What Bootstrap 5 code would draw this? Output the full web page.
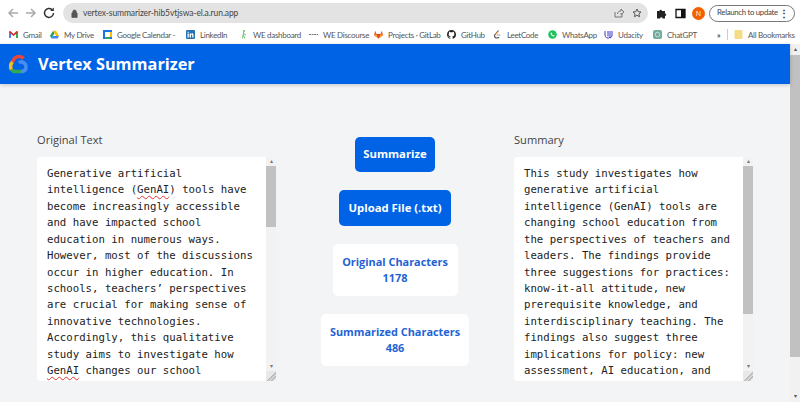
<!DOCTYPE html>
<html lang="en">
<head>
<meta charset="utf-8">
<title>Vertex Summarizer</title>
<link href="https://cdn.jsdelivr.net/npm/bootstrap@5.3.0/dist/css/bootstrap.min.css" rel="stylesheet">
<style>
html,body{height:402px;overflow:hidden;margin:0}
body{font-family:"Open Sans","Noto Sans",sans-serif;background:#f3f4f6;color:#333}
.shell{height:402px}
.toolbar{height:25px;background:#fff;padding:3px 5px 2px 6px}
.nav-ic{width:14px;height:14px;color:#aaa;flex:none;margin-right:4px}
.nav-ic.on{color:#333}
.omnibox{width:585px;height:20px;flex:none;margin-left:3px;border-radius:10px;background:#e3e3e3;font-family:Lato,sans-serif;font-size:8.5px;letter-spacing:-.1px;color:#444;padding:0 6px 0 8px;gap:5px}
.url{flex:1;white-space:nowrap}
.tool-ic{flex:none}
.star-ic{margin-left:3px}
.tb-right{margin-left:8px;gap:8px}
.avatar{width:13px;height:13px;border-radius:50%;background:#f26100;color:#fff;font-size:7px;line-height:13px;text-align:center;margin-left:-2px}
.relaunch{width:86px;height:17px;flex:none;border:1px solid #777;border-radius:9px;font-family:Lato,sans-serif;font-size:7.8px;letter-spacing:-.3px;color:#444;padding:0 5px 0 7px;white-space:nowrap;margin-left:-4px}
.dots{font-weight:700;font-size:10px;line-height:1;color:#333}
.bookmarks{height:19px;background:#fff;font-family:Lato,sans-serif;font-size:8px;letter-spacing:-.3px;color:#555;padding-left:9px;white-space:nowrap}
.bm{height:100%;gap:5px;flex:none}
.bm svg{flex:none;width:9px;height:9px}
.w1{width:41px}.w2{width:53px}.w3{width:83px}.w4{width:53px}.w5{width:70px}.w6{width:65px}.w7{width:73px}.w8{width:46px}.w9{width:55px}.w10{width:56px}.w11{width:49px}.w12{width:64px}
.chev{width:10px;flex:none;font-weight:700;color:#444}
.sep{width:1px;height:11px;background:#ccc;margin-right:6px;flex:none}
.belowbars{height:358px}
.appcol{width:790px;flex:none}
.appbar{height:40px;background:#0063e5;color:#fff;padding-left:9px;gap:10px;box-shadow:0 1px 4px rgba(0,0,0,.2);position:relative}
.apptitle{font-family:"Open Sans",sans-serif;font-size:16.3px;font-weight:700;margin:0;line-height:1}
.main-area{padding:48px 37px 0}
.pane{width:239px}
.pane-label{font-size:11.1px;line-height:16px;margin-bottom:9px;color:#444}
.textbox{width:239px;height:224px;background:#fff;border-radius:4px;overflow:hidden}
.textbody{flex:1;padding:9px 0 0 10px;font-family:"DejaVu Sans Mono","Liberation Mono",monospace;font-size:10.7px;line-height:16.42px;color:#222;white-space:nowrap;overflow:hidden}
.sq{text-decoration:underline wavy #d33 1px;text-underline-offset:2px}
.sbar{width:10px;background:#f2f2f2;flex:none}
.arrow{height:9px;color:#777;font-size:6px;line-height:9px;text-align:center}
.thumb{background:#c1c1c1;margin-bottom:auto}
.thumb-a{height:61px}.thumb-b{height:148px}
.grip{height:10px;background:linear-gradient(135deg,#e8e8e8 50%,#aaa 50%,#ddd 70%,#999 70%,#e0e0e0 85%)}
.midcol{padding-top:5px;gap:18px}
.action{background:#0063e5;color:#fff;border:0;border-radius:5px;font-size:11.3px;font-weight:700;height:35px;padding:0;font-family:inherit}
.act-a{width:80px}.act-b{width:112px;height:36px}
.stat{background:#fff;border-radius:5px;height:52px;color:#1f63d6;font-size:10.9px;font-weight:700;line-height:16.4px;text-align:center}
.st-a{width:125px}.st-b{width:148px}
.pagebar{width:10px;background:#f1f1f1;flex:none}
.pb-thumb{height:302px;background:#c1c1c1;margin-bottom:auto}
.pb-arrow{height:11px;font-size:6px;line-height:11px;text-align:center;color:#555}
</style>
</head>
<body>
<div class="shell d-flex flex-column">
  <div class="toolbar d-flex align-items-center">
    <svg class="nav-ic" viewBox="0 0 14 14" fill="none" stroke="currentColor" stroke-width="1.5"><path d="M12 7H3M7 3 3 7l4 4"/></svg>
    <svg class="nav-ic" viewBox="0 0 14 14" fill="none" stroke="currentColor" stroke-width="1.5"><path d="M2 7h9M7 3l4 4-4 4"/></svg>
    <svg class="nav-ic on" viewBox="0 0 14 14" fill="none" stroke="currentColor" stroke-width="1.5"><path d="M11.5 7A4.5 4.5 0 1 1 10 3.600"/><path d="M11.800 1.500v3.600H8.200" fill="currentColor" stroke="none"/></svg>
    <div class="omnibox d-flex align-items-center">
      <svg class="tool-ic" width="7" height="9" viewBox="0 0 8 9"><path d="M1 4h6v5H1zM2 4V2.500a2 2 0 0 1 4 0V4" fill="#555" stroke="#555" stroke-width=".8"/></svg>
      <span class="url">vertex-summarizer-hib5vtjswa-el.a.run.app</span>
      <svg class="tool-ic" width="10" height="10" viewBox="0 0 10 10" fill="none" stroke="#777"><path d="M1 4v5h7V6M3.500 6c0-2 1.500-3 3.500-3V1l3 3-3 2.500V5"/></svg>
      <svg class="tool-ic star-ic" width="10" height="10" viewBox="0 0 10 10" fill="none" stroke="#555"><path d="m5 1 1.200 2.700 2.800.3-2.100 1.900.6 2.800L5 7.300 2.500 8.700l.6-2.800L1 4l2.800-.3z"/></svg>
    </div>
    <div class="tb-right d-flex align-items-center">
      <svg width="11" height="11" viewBox="0 0 11 11"><path d="M1 3h2.500a1.200 1.200 0 0 1 2.400 0H9v2.500a1.200 1.200 0 0 1 0 2.400V10.500H6.500a1.200 1.200 0 0 0-2.400 0H1z" fill="#222"/></svg>
      <svg width="11" height="11" viewBox="0 0 11 11"><path d="M1 1.500h9v8H1z" fill="none" stroke="#111" stroke-width="1.300"/><path d="M6 1.500h4v8H6z" fill="#111"/></svg>
      <div class="avatar">N</div>
      <div class="relaunch d-flex align-items-center justify-content-between"><span>Relaunch to update</span><span class="dots">⋮</span></div>
    </div>
  </div>
  <div class="bookmarks d-flex align-items-center">
    <div class="bm w1 d-flex align-items-center"><svg viewBox="0 0 9 9"><path d="M0 1.500 1.500 1 4.500 4l3-3L9 1.500V8H7V4L4.500 6 2 4v4H0z" fill="#d93025"/><path d="M0 2v6h2V4z" fill="#4285f4"/><path d="M7 4v4h2V2z" fill="#34a853"/></svg><span>Gmail</span></div>
    <div class="bm w2 d-flex align-items-center"><svg viewBox="0 0 9 9"><path d="M3 .8 0 6l1.500 2.500L4.500 3.300z" fill="#1ea362"/><path d="M6 .8H3L6 6h3z" fill="#fbbc04"/><path d="M1.500 8.500 3 6h6L7.500 8.500z" fill="#4285f4"/></svg><span>My Drive</span></div>
    <div class="bm w3 d-flex align-items-center"><svg viewBox="0 0 9 9"><rect width="9" height="9" fill="#1a73e8"/><rect x="2" y="2" width="5" height="5" fill="#fff"/><path d="M7 2h2v5H7z" fill="#fbbc04"/><path d="M2 7h5v2H2z" fill="#34a853"/></svg><span>Google Calendar -</span></div>
    <div class="bm w4 d-flex align-items-center"><svg viewBox="0 0 9 9"><rect width="9" height="9" rx="1" fill="#2573b5"/><path d="M1.500 3.500h1.300V7.500H1.500zM1.500 1.700h1.300V2.800H1.500zM3.700 3.500H5V4c.8-1 2.500-.9 2.500 1v2.500H6.200V5.300c0-1-1.200-1-1.200 0v2.200H3.700z" fill="#fff"/></svg><span>LinkedIn</span></div>
    <div class="bm w5 d-flex align-items-center"><svg viewBox="0 0 9 9" fill="none" stroke="#5cb85c" stroke-width=".9"><circle cx="5" cy="1" r=".7"/><path d="M4.700 2 3.500 8.500M4.600 3.500 7 5M4.200 5 6 8.500"/></svg><span>WE dashboard</span></div>
    <div class="bm w6 d-flex align-items-center"><svg viewBox="0 0 9 9"><path d="M0 4.500h9" stroke="#777" stroke-width="1" stroke-dasharray="2 .6"/></svg><span>WE Discourse</span></div>
    <div class="bm w7 d-flex align-items-center"><svg viewBox="0 0 9 9"><path d="M4.500 8.500 0 5.200 1.200.8 2.500 4h4L7.800.8 9 5.200z" fill="#e8562b"/><path d="M0 5.200 2.500 4l2 4.500zM9 5.200 6.500 4l-2 4.500z" fill="#fca326"/><path d="M4.500 8.500 2.500 4h4z" fill="#e24329"/></svg><span>Projects · GitLab</span></div>
    <div class="bm w8 d-flex align-items-center"><svg viewBox="0 0 16 16"><path d="M8 0C3.580 0 0 3.580 0 8c0 3.540 2.290 6.530 5.470 7.590.4.070.55-.17.55-.38v-1.340c-2.230.48-2.700-1.070-2.700-1.070-.36-.93-.89-1.170-.89-1.170-.73-.5.050-.49.050-.49.800.060 1.230.830 1.230.830.710 1.220 1.870.870 2.330.660.070-.520.280-.870.510-1.070-1.780-.200-3.640-.890-3.640-3.950 0-.870.310-1.590.820-2.150-.080-.200-.360-1.020.080-2.120 0 0 .670-.210 2.200.820a7.600 7.600 0 0 1 4 0c1.530-1.040 2.200-.820 2.200-.820.440 1.100.160 1.920.080 2.120.510.560.820 1.270.82 2.150 0 3.070-1.870 3.750-3.650 3.950.290.250.540.730.540 1.480v2.190c0 .210.150.460.550.380A8 8 0 0 0 16 8c0-4.420-3.580-8-8-8z" fill="#222"/></svg><span>GitHub</span></div>
    <div class="bm w9 d-flex align-items-center"><svg viewBox="0 0 9 9" fill="none" stroke-width="1.100"><path d="M5.500.5 2 4.500c-1 1.300-.5 3.500 2 3.500 1 0 1.500-.3 2-.8" stroke="#444"/><path d="M3.500 5h4" stroke="#aaa"/><path d="M2.500 4 5 2" stroke="#f2a33a"/></svg><span>LeetCode</span></div>
    <div class="bm w10 d-flex align-items-center"><svg viewBox="0 0 9 9"><circle cx="4.500" cy="4.500" r="4.300" fill="#1fc25b"/><path d="M3 2.500c-1 1 .2 2.800 1 3.300s2 1 2.700 0l-.9-.8-.6.400c-.8-.4-1.100-1-1.300-1.500l.4-.5-.7-1z" fill="#fff"/></svg><span>WhatsApp</span></div>
    <div class="bm w11 d-flex align-items-center"><svg viewBox="0 0 9 9" fill="none" stroke="#3838c9" stroke-width="1"><path d="M1 1v4a3 3 0 0 0 5 2.300V1M4 1v5.500M8 1v4a3 3 0 0 1-2 3"/></svg><span>Udacity</span></div>
    <div class="bm w12 d-flex align-items-center"><svg viewBox="0 0 9 9"><rect width="9" height="9" rx="2" fill="#74aa9c"/><circle cx="4.500" cy="4.500" r="2.300" fill="none" stroke="#d8ebe6" stroke-width=".8"/></svg><span>ChatGPT</span></div>
    <div class="chev">»</div>
    <div class="sep"></div>
    <div class="bm d-flex align-items-center"><svg viewBox="0 0 9 9"><rect x=".5" width="8" height="9" rx="1" fill="#f7dc85"/></svg><span>All Bookmarks</span></div>
  </div>
  <div class="belowbars d-flex">
    <div class="appcol">
      <header class="appbar d-flex align-items-center">
        <svg width="19" height="20" viewBox="0 0 19 20" fill="none" stroke-width="3.600"><path d="M3.500 8.500C4 5 7 2.500 10 2.500c2 0 3.500.8 4.500 2" stroke="#e8453c"/><path d="M3.500 8C1.500 10 1 13 2.500 15.500" stroke="#f6bb1c"/><path d="M2.500 15.500c1 1.500 2.500 2 4 2H13" stroke="#34a853"/><path d="M12 17.500c3.500 0 5-2 5-4.500 0-2-1-3.500-2.500-4.500C13 7.700 11 8 10 9" stroke="#4a8cf0"/></svg>
        <h1 class="apptitle">Vertex Summarizer</h1>
      </header>
      <main class="main-area d-flex justify-content-between">
        <section class="pane">
          <div class="pane-label">Original Text</div>
          <div class="textbox d-flex">
            <div class="textbody">Generative artificial<br>intelligence (<span class="sq">GenAI</span>) tools have<br>become increasingly accessible<br>and have impacted school<br>education in numerous ways.<br>However, most of the discussions<br>occur in higher education. In<br>schools, teachers’ perspectives<br>are crucial for making sense of<br>innovative technologies.<br>Accordingly, this qualitative<br>study aims to investigate how<br><span class="sq">GenAI</span> changes our school</div>
            <div class="sbar d-flex flex-column">
              <div class="arrow">▴</div><div class="thumb thumb-a"></div><div class="arrow">▾</div><div class="grip"></div>
            </div>
          </div>
        </section>
        <section class="midcol d-flex flex-column align-items-center">
          <button type="button" class="btn action act-a">Summarize</button>
          <button type="button" class="btn action act-b">Upload File (.txt)</button>
          <div class="stat st-a d-flex align-items-center justify-content-center">Original Characters<br>1178</div>
          <div class="stat st-b d-flex align-items-center justify-content-center">Summarized Characters<br>486</div>
        </section>
        <section class="pane">
          <div class="pane-label">Summary</div>
          <div class="textbox d-flex">
            <div class="textbody">This study investigates how<br>generative artificial<br>intelligence (GenAI) tools are<br>changing school education from<br>the perspectives of teachers and<br>leaders. The findings provide<br>three suggestions for practices:<br>know-it-all attitude, new<br>prerequisite knowledge, and<br>interdisciplinary teaching. The<br>findings also suggest three<br>implications for policy: new<br>assessment, AI education, and</div>
            <div class="sbar d-flex flex-column">
              <div class="arrow">▴</div><div class="thumb thumb-b"></div><div class="arrow">▾</div><div class="grip"></div>
            </div>
          </div>
        </section>
      </main>
    </div>
    <div class="pagebar d-flex flex-column">
      <div class="pb-arrow">▴</div>
      <div class="pb-thumb"></div>
      <div class="pb-arrow">▾</div>
    </div>
  </div>
</div>
</body>
</html>
